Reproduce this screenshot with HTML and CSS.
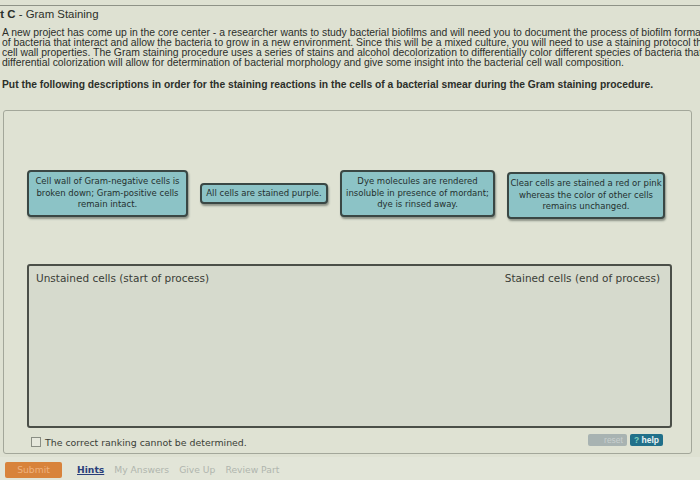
FILE: index.html
```html
<!DOCTYPE html>
<html lang="en">
<head>
  <meta charset="UTF-8">
  <title>Part C - Gram Staining</title>
  <link rel="stylesheet" href="styles.css">
</head>
<body>

<div class="page">
  <h1 class="part-title"><span class="part-label">Part C</span> - Gram Staining</h1>

  <p class="intro">
    <span class="line">A new project has come up in the core center - a researcher wants to study bacterial biofilms and will need you to document the process of biofilm formation</span>
    <span class="line">of bacteria that interact and allow the bacteria to grow in a new environment. Since this will be a mixed culture, you will need to use a staining protocol that</span>
    <span class="line">cell wall properties. The Gram staining procedure uses a series of stains and alcohol decolorization to differentially color different species of bacteria that</span>
    <span class="line">differential colorization will allow for determination of bacterial morphology and give some insight into the bacterial cell wall composition.</span>
  </p>

  <p class="prompt">Put the following descriptions in order for the staining reactions in the cells of a bacterial smear during the Gram staining procedure.</p>

  <div class="ranking">
    <div class="choices">
      <div class="choice w1">Cell wall of Gram-negative cells is broken down; Gram-positive cells remain intact.</div>
      <div class="choice w2">All cells are stained purple.</div>
      <div class="choice w3">Dye molecules are rendered insoluble in presence of mordant; dye is rinsed away.</div>
      <div class="choice w4">Clear cells are stained a red or pink whereas the color of other cells remains unchanged.</div>
    </div>

    <div class="dropzone">
      <span>Unstained cells (start of process)</span>
      <span>Stained cells (end of process)</span>
    </div>

    <div class="ranking-foot">
      <label class="undetermined"><span class="box"></span>The correct ranking cannot be determined.</label>
      <div class="tools">
        <span class="btn-reset">reset</span>
        <span class="btn-help"><b>?</b> help</span>
      </div>
    </div>
  </div>
</div>

<div class="actions">
  <span class="btn-submit">Submit</span>
  <a class="hints" href="#">Hints</a>
  <span class="off">My Answers</span>
  <span class="off">Give Up</span>
  <span class="off">Review Part</span>
</div>

</body>
</html>
```

FILE: styles.css
```css
html, body { margin: 0; padding: 0; }
body {
  width: 700px;
  height: 480px;
  overflow: hidden;
  background: #dee1d2;
  font-family: "Liberation Sans", Arial, sans-serif;
  color: #2c2f2a;
}

.page {
  border-top: 1px solid #8e9287;
  margin-top: 5px;
  padding: 0 0 0 2px;
}

.part-title {
  margin: 2px 0 0;
  font-size: 11.4px;
  font-weight: normal;
  text-indent: -20px;
  white-space: nowrap;
}
.part-label { font-weight: bold; }

.intro {
  margin: 8px 0 0;
  font-size: 10.4px;
  line-height: 9.9px;
  white-space: nowrap;
}
.intro .line { display: block; }

.prompt {
  margin: 11px 0 0;
  font-size: 10.3px;
  font-weight: bold;
  white-space: nowrap;
}

.ranking {
  margin: 20px 0 0 1px;
  border: 1px solid #a3a79a;
  border-radius: 3px;
  background: #dfe2d3;
  height: 344px;
  padding: 0 0 0 23px;
  box-sizing: border-box;
  width: 689px;
  font-family: "DejaVu Sans", Verdana, sans-serif;
}

.choices {
  display: flex;
  align-items: center;
  gap: 12px;
  margin-top: 59px;
  height: 48px;
}
.choice {
  background: #8cc3c6;
  border: 2px solid #3a4744;
  border-radius: 4px;
  box-shadow: 1px 2px 2px rgba(40, 50, 45, 0.45);
  font-size: 8.5px;
  line-height: 11.5px;
  color: #24302e;
  text-align: center;
  padding: 4px 0;
  box-sizing: border-box;
}
.w1 { width: 161px; }
.w2 { width: 128px; padding: 3px 0; }
.w3 { width: 155px; }
.w4 { width: 158px; margin-top: 4px; }

.dropzone {
  margin-top: 46px;
  width: 645px;
  height: 164px;
  box-sizing: border-box;
  border: 2px solid #4b4f48;
  border-radius: 3px;
  background: #d6dacd;
  display: flex;
  justify-content: space-between;
  align-items: flex-start;
  padding: 6px 10px 0 7px;
  font-size: 10.5px;
  color: #3a3d37;
}

.ranking-foot {
  display: flex;
  align-items: center;
  justify-content: space-between;
  width: 636px;
  margin-top: 4px;
}
.undetermined {
  display: flex;
  align-items: center;
  gap: 4px;
  font-size: 9.4px;
  color: #3a3d37;
  padding: 5px 0 0 4px;
}
.undetermined .box {
  width: 8px;
  height: 8px;
  border: 1px solid #8a8e84;
  background: #e6e8dc;
}
.tools { display: flex; gap: 3px; font-family: "Liberation Sans", Arial, sans-serif; font-size: 8.5px; }
.btn-reset {
  background: #a8b3b2;
  color: #c9d0cf;
  padding: 1px 4px 1px 16px;
  border-radius: 2px;
}
.btn-help {
  background: #21708a;
  color: #eef4f4;
  font-weight: bold;
  padding: 1px 4px;
  border-radius: 2px;
}
.btn-help b { color: #7fd0c0; }

.actions {
  margin-top: 3px;
  display: flex;
  align-items: center;
  gap: 10px;
  padding: 2px 0 0 5px;
  height: 22px;
  background: #e2e5d8;
  font-family: "DejaVu Sans", Verdana, sans-serif;
  font-size: 9.2px;
}
.btn-submit {
  background: #d8833b;
  color: #efb27e;
  width: 57px;
  height: 16px;
  line-height: 16px;
  text-align: center;
  border-radius: 2px;
  margin-right: 5px;
}
.hints { color: #2b3f7a; font-weight: bold; }
.off { color: #b0b5ae; }
```
